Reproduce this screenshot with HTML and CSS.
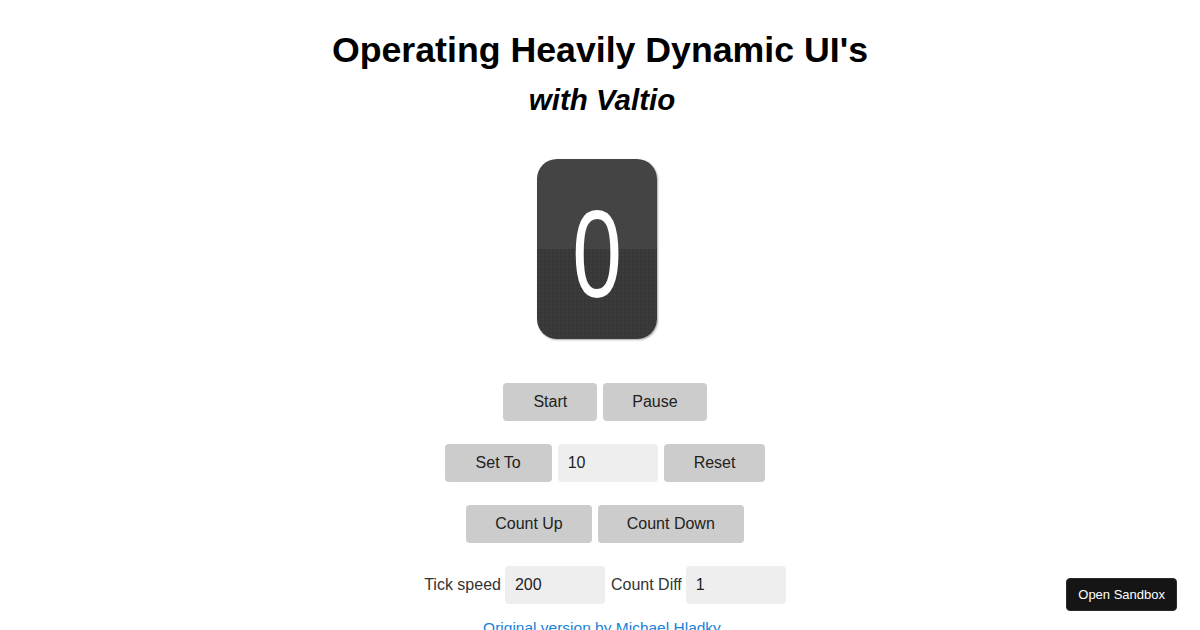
FILE: index.html
```html
<!DOCTYPE html>
<html lang="en">
<head>
    <meta charset="UTF-8">
    <title>Operating Heavily Dynamic UI's</title>
    <meta name="viewport" content="width=device-width, initial-scale=1">
    <link rel="stylesheet" href="styles.css">
</head>
<body>
    <div class="app">
        <h1>Operating Heavily Dynamic UI's</h1>
        <h2><i>with Valtio</i></h2>

        <div class="counter">
            <div class="card">
                <div class="card-top"></div>
                <div class="card-bottom"></div>
                <span class="digit">0</span>
            </div>
        </div>

        <div class="row row-first">
            <button class="btn btn-start">Start</button>
            <button class="btn btn-pause">Pause</button>
        </div>
        <div class="row">
            <button class="btn btn-set">Set To</button>
            <input class="field" type="number" value="10">
            <button class="btn btn-reset">Reset</button>
        </div>
        <div class="row">
            <button class="btn btn-up">Count Up</button>
            <button class="btn btn-down">Count Down</button>
        </div>
        <div class="row">
            <label>Tick speed</label>
            <input class="field" type="number" value="200">
            <label>Count Diff</label>
            <input class="field" type="number" value="1">
        </div>

        <a class="credit" href="#">Original version by Michael Hladky</a>
    </div>

    <a class="sandbox" href="#">Open Sandbox</a>
</body>
</html>
```

FILE: styles.css
```css
body { margin: 0; background: #fff; font-family: "Liberation Sans", Arial, sans-serif; color: #222; }
.app { display: flex; flex-direction: column; align-items: center; padding-top: 28px; }
h1 { margin: 0; font-size: 35.7px; font-weight: bold; color: #000; line-height: 44px; }
h2 { margin: 10px 0 0 4px; font-size: 29.5px; font-weight: bold; color: #000; line-height: 36px; }

.counter { margin-top: 41px; }
.card { position: relative; width: 120px; height: 180px; margin-right: 6px; border-radius: 20px; overflow: hidden; box-shadow: 1px 1px 2px rgba(0,0,0,0.35); }
.card-top { height: 90px; background: #444; }
.card-bottom { height: 90px; background-color: #383838; background-image: radial-gradient(rgba(255,255,255,0.05) 0.6px, transparent 0.8px); background-size: 4px 4px; }
.digit { position: absolute; left: 0; right: 0; top: 0; bottom: 0; display: flex; align-items: center; justify-content: center; color: #fff; font-size: 124px; font-weight: 300; transform: translateY(5px) scaleX(0.72); }

.row { display: flex; align-items: center; gap: 6px; margin-top: 23px; padding-left: 10px; }
.row-first { margin-top: 44px; }
.btn { height: 38px; border: 0; border-radius: 4px; background: #ccc; color: #222; font-family: inherit; font-size: 16px; padding: 0 29px; }
.btn-start { padding: 0 30px; }
.btn-set { padding: 0 31px; }
.btn-reset { padding: 0 30px; }
.field { box-sizing: border-box; width: 100px; height: 38px; border: 0; border-radius: 4px; background: #eee; color: #222; font-family: inherit; font-size: 16px; padding: 0 10px; -moz-appearance: textfield; }
.field::-webkit-inner-spin-button, .field::-webkit-outer-spin-button { -webkit-appearance: none; margin: 0; }
label { font-size: 16px; color: #333; margin-right: -2px; }

.credit { margin-top: 15px; padding-left: 4px; color: #1a7fd6; text-decoration: none; font-size: 15.5px; line-height: 18px; }

.sandbox { position: fixed; right: 23px; bottom: 19px; background: #151515; color: #fff; font-size: 13px; text-decoration: none; padding: 8px 11px 8px; border-radius: 4px; border: 1px solid #2a2a2a; }
```
